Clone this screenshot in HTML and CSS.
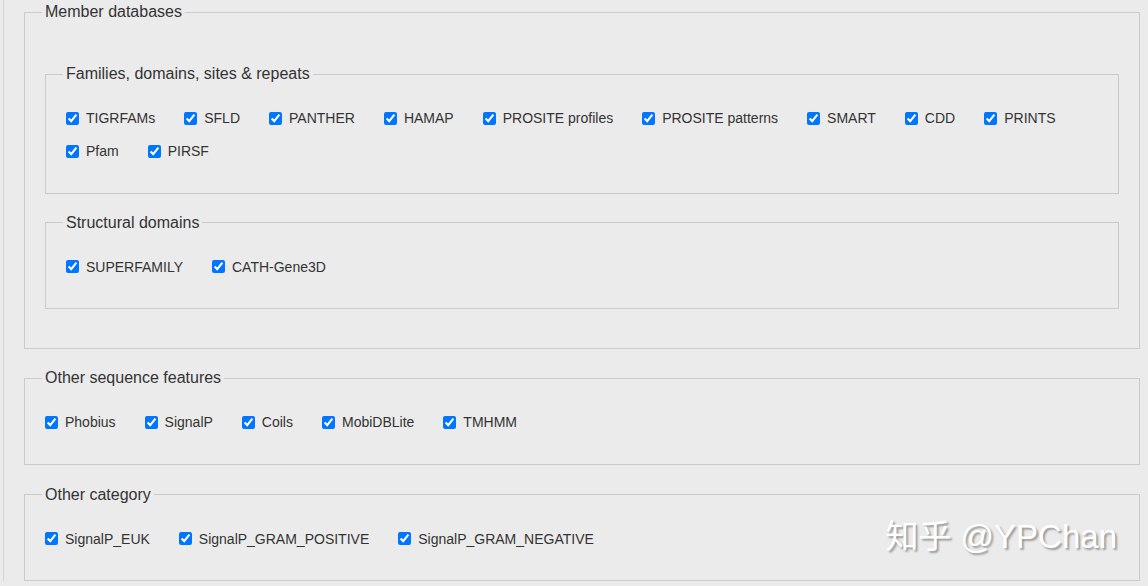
FILE: index.html
```html
<!DOCTYPE html>
<html>
<head>
<meta charset="utf-8">
<link rel="stylesheet" href="styles.css">
</head>
<body>
<div class="page">
  <fieldset class="group">
    <legend>Member databases</legend>
    <fieldset class="group">
      <legend>Families, domains, sites &amp; repeats</legend>
      <div class="opts">
        <label class="opt"><input type="checkbox" checked>TIGRFAMs</label>
        <label class="opt"><input type="checkbox" checked>SFLD</label>
        <label class="opt"><input type="checkbox" checked>PANTHER</label>
        <label class="opt"><input type="checkbox" checked>HAMAP</label>
        <label class="opt"><input type="checkbox" checked>PROSITE profiles</label>
        <label class="opt"><input type="checkbox" checked>PROSITE patterns</label>
        <label class="opt"><input type="checkbox" checked>SMART</label>
        <label class="opt"><input type="checkbox" checked>CDD</label>
        <label class="opt"><input type="checkbox" checked>PRINTS</label>
        <label class="opt"><input type="checkbox" checked>Pfam</label>
        <label class="opt"><input type="checkbox" checked>PIRSF</label>
      </div>
    </fieldset>
    <fieldset class="group spaced">
      <legend>Structural domains</legend>
      <div class="opts">
        <label class="opt"><input type="checkbox" checked>SUPERFAMILY</label>
        <label class="opt"><input type="checkbox" checked>CATH-Gene3D</label>
      </div>
    </fieldset>
  </fieldset>

  <fieldset class="group spaced">
    <legend>Other sequence features</legend>
    <div class="opts">
      <label class="opt"><input type="checkbox" checked>Phobius</label>
      <label class="opt"><input type="checkbox" checked>SignalP</label>
      <label class="opt"><input type="checkbox" checked>Coils</label>
      <label class="opt"><input type="checkbox" checked>MobiDBLite</label>
      <label class="opt"><input type="checkbox" checked>TMHMM</label>
    </div>
  </fieldset>

  <fieldset class="group spaced last">
    <legend>Other category</legend>
    <div class="opts">
      <label class="opt"><input type="checkbox" checked>SignalP_EUK</label>
      <label class="opt"><input type="checkbox" checked>SignalP_GRAM_POSITIVE</label>
      <label class="opt"><input type="checkbox" checked>SignalP_GRAM_NEGATIVE</label>
    </div>
  </fieldset>
</div>
<div class="watermark">知乎 @YPChan</div>
</body>
</html>
```

FILE: styles.css
```css
html, body {
  margin: 0;
  padding: 0;
  background: #ebebeb;
}
body {
  font-family: "Liberation Sans", Arial, sans-serif;
  color: #333;
  position: relative;
  height: 586px;
  overflow: hidden;
}
.page {
  margin-left: 3px;
  border-left: 1px solid #d3d3d3;
  padding: 2px 8px 0 20px;
}
.group {
  margin: 0;
  border: 1px solid #cacaca;
  padding: 24px 20px 31.5px 20px;
  min-width: 0;
}
.page > .group:first-child {
  padding-top: 42px;
  padding-bottom: 39px;
}
.spaced {
  margin-top: 19px;
}
.spaced.last {
  margin-top: 20px;
}
legend {
  font-size: 16px;
  line-height: 20px;
  padding: 0 3px;
  margin-left: -3px;
  color: #333;
}
.opts {
  display: flex;
  flex-wrap: wrap;
  column-gap: 29px;
  row-gap: 13px;
}
.opt {
  display: flex;
  align-items: center;
  height: 20px;
  font-size: 14px;
  line-height: 20px;
  color: #333;
}
.opt input {
  margin: 0 7px 0 0;
  width: 13px;
  height: 13px;
}
.watermark {
  position: absolute;
  right: 31px;
  top: 519px;
  font-family: "Liberation Sans", "Noto Sans CJK SC", sans-serif;
  font-size: 33px;
  line-height: 36px;
  color: #ffffff;
  text-shadow: 2px 2px 2px #9a9a9a;
  white-space: nowrap;
}
```
